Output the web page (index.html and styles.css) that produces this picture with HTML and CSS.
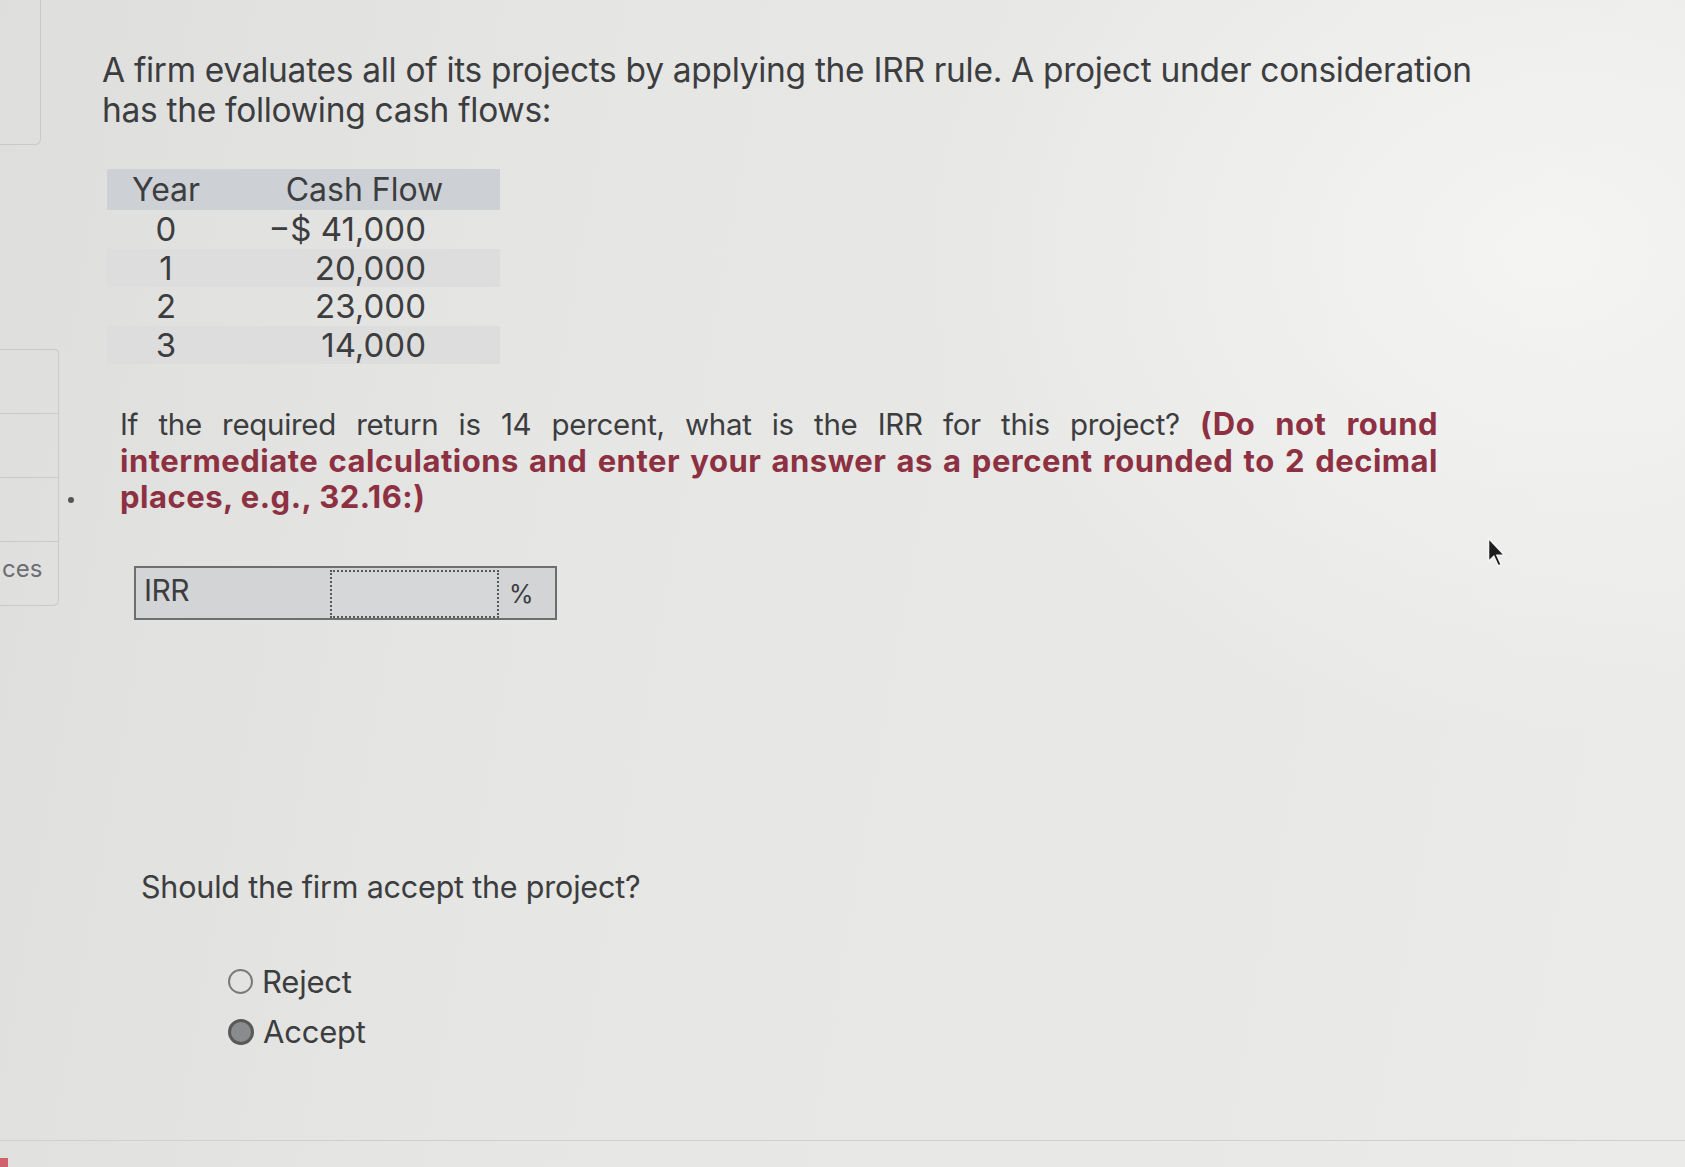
FILE: index.html
```html
<!DOCTYPE html>
<html lang="en">
<head>
<meta charset="utf-8">
<title>IRR question</title>
<link rel="stylesheet" href="styles.css">
</head>
<body>
<div class="screen">
  <aside class="sidebar">
    <div class="side-box-top"></div>
    <div class="side-box">
      <div class="side-cell"></div>
      <div class="side-cell"></div>
      <div class="side-cell"></div>
      <div class="side-cell side-label">ces</div>
    </div>
  </aside>
  <main class="content">
    <p class="intro">A firm evaluates all of its projects by applying the IRR rule. A project under consideration has the following cash flows:</p>
    <table class="cash">
      <thead>
        <tr><th class="c-year">Year</th><th class="c-flow">Cash Flow</th></tr>
      </thead>
      <tbody>
        <tr><td class="c-year">0</td><td class="c-flow">&minus;$ 41,000</td></tr>
        <tr class="alt"><td class="c-year">1</td><td class="c-flow">20,000</td></tr>
        <tr><td class="c-year">2</td><td class="c-flow">23,000</td></tr>
        <tr class="alt"><td class="c-year">3</td><td class="c-flow">14,000</td></tr>
      </tbody>
    </table>
    <div class="question">
      <span class="dot"></span>
      <p class="q-first">If the required return is 14 percent, what is the IRR for this project? <b class="hint">(Do not round</b></p>
      <p class="q-rest hint">intermediate calculations and enter your answer as a percent rounded to 2 decimal places, e.g., 32.16:)</p>
    </div>
    <div class="irr">
      <span class="irr-label">IRR</span>
      <span class="irr-input"></span>
      <span class="irr-unit">%</span>
    </div>
    <p class="accept-q">Should the firm accept the project?</p>
    <div class="choices">
      <label class="choice"><span class="radio"></span>Reject</label>
      <label class="choice"><span class="radio on"></span>Accept</label>
    </div>
  </main>
  <svg class="cursor" width="24" height="32" viewBox="0 0 22 30"><path d="M3 2 L3 24 L8 19 L12 28 L15 27 L11 18 L18 18 Z" fill="#1e1e1e" stroke="#f4f4f4" stroke-width="1.5"/></svg>
  <div class="bottom-rule"></div>
  <span class="corner-mark"></span>
</div>
</body>
</html>
```
FILE: styles.css
```css
html, body {
  margin: 0;
  padding: 0;
}
body {
  width: 1685px;
  height: 1167px;
  overflow: hidden;
  font-family: Inter, "Open Sans", Arial, sans-serif;
  color: #3c3d3f;
}
.screen {
  position: relative;
  width: 1685px;
  height: 1167px;
  display: flex;
  background:
    radial-gradient(ellipse 900px 700px at 1550px 250px, rgba(245,245,244,0.9), rgba(245,245,244,0) 70%),
    linear-gradient(100deg, #dedfdd 0%, #e6e6e4 35%, #e8e8e6 70%, #ebebea 100%);
}
.sidebar {
  width: 60px;
  flex: none;
  display: flex;
  flex-direction: column;
}
.side-box-top {
  width: 40px;
  height: 145px;
  margin-top: -2px;
  border: 1px solid #c9c9c8;
  border-left: none;
  border-radius: 0 0 6px 0;
}
.side-box {
  margin-top: 204px;
  width: 58px;
  border: 1px solid #c9c9c8;
  border-left: none;
  border-radius: 0 4px 6px 0;
  display: flex;
  flex-direction: column;
}
.side-cell {
  height: 63px;
  border-bottom: 1px solid #c9c9c8;
}
.side-cell:last-child {
  border-bottom: none;
}
.side-label {
  font-size: 24px;
  color: #6b6e72;
  line-height: 40px;
  padding-top: 7px;
  height: 56px;
  padding-left: 2px;
}
.content {
  padding-left: 42px;
  flex: 1;
}
.intro {
  margin: 50px 0 0 0;
  width: 1400px;
  font-size: 33.5px;
  line-height: 40px;
  letter-spacing: -0.3px;
}
.cash {
  margin: 39px 0 0 5px;
  border-collapse: collapse;
  width: 393px;
  font-size: 33px;
}
.cash th {
  background: #cdd0d4;
  font-weight: 400;
  font-size: 32px;
  height: 41px;
  padding: 0;
  line-height: 41px;
}
.cash td {
  height: 38.5px;
  padding: 0;
  line-height: 38px;
}
.cash tr.alt td {
  background: #dcdddc;
}
.cash th.c-year, .cash td.c-year {
  width: 118px;
  text-align: center;
}
.cash th.c-flow {
  text-align: center;
  padding-left: 4px;
}
.cash td.c-flow {
  text-align: right;
  padding-right: 74px;
}
.question {
  position: relative;
  margin: 42px 0 0 18px;
  width: 1318px;
}
.q-first {
  margin: 0;
  font-size: 29.5px;
  line-height: 36.5px;
  letter-spacing: -0.3px;
  text-align: justify;
  text-align-last: justify;
}
.q-first .hint {
  font-size: 31px;
  letter-spacing: 0.5px;
}
.q-rest {
  margin: 0;
  font-size: 31px;
  line-height: 36px;
  letter-spacing: 0.5px;
  text-align: justify;
}
.hint {
  color: #8d3142;
  font-weight: 700;
}
.dot {
  position: absolute;
  left: -52px;
  top: 91px;
  width: 6px;
  height: 6px;
  border-radius: 50%;
  background: #555;
}
.irr {
  margin: 51px 0 0 32px;
  width: 419px;
  height: 50px;
  border: 2px solid #6d6e70;
  background: #d3d4d5;
  display: flex;
  align-items: stretch;
}
.irr-label {
  width: 186px;
  padding-left: 8px;
  font-size: 30px;
  line-height: 44px;
  letter-spacing: -0.5px;
}
.irr-input {
  width: 165px;
  border: 2px dotted #55575a;
  margin: 2px 0 0 0;
  background: #d6d7d8;
}
.irr-unit {
  padding-left: 10px;
  font-size: 25px;
  line-height: 52px;
}
.accept-q {
  margin: 247px 0 0 39px;
  font-size: 30.5px;
  line-height: 40px;
  letter-spacing: -0.2px;
}
.choices {
  margin: 55px 0 0 126px;
  display: flex;
  flex-direction: column;
  gap: 10px;
}
.choice {
  display: flex;
  align-items: center;
  gap: 9px;
  font-size: 31px;
  line-height: 40px;
  letter-spacing: -0.2px;
}
.radio {
  width: 25px;
  height: 25px;
  border: 2px solid #7a7b7d;
  border-radius: 50%;
  box-sizing: border-box;
}
.radio.on {
  border: 3px solid #58595b;
  background: #8a8b8d;
  width: 26px;
  height: 26px;
}
.cursor {
  position: absolute;
  left: 1485px;
  top: 536px;
}
.bottom-rule {
  position: absolute;
  left: 0;
  right: 0;
  top: 1140px;
  height: 1px;
  background: #cfd0cf;
}
.corner-mark {
  position: absolute;
  left: 0;
  top: 1158px;
  width: 8px;
  height: 9px;
  background: #d0626e;
}
```
